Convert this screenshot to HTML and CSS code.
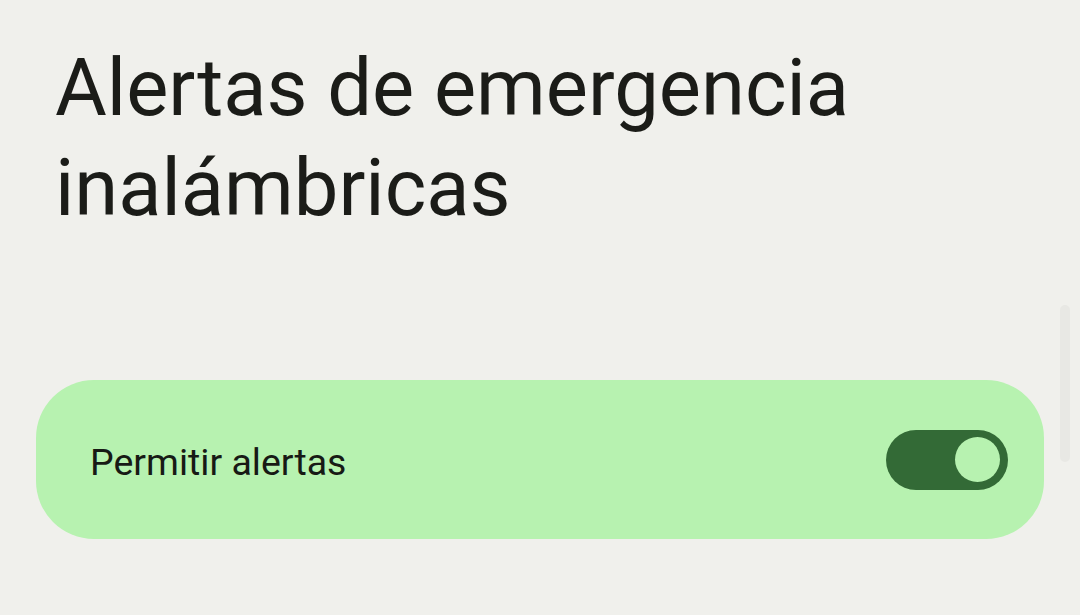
FILE: index.html
```html
<!DOCTYPE html>
<html lang="es">
<head>
<meta charset="utf-8">
<title>Alertas de emergencia inalámbricas</title>
<link rel="stylesheet" href="styles.css">
</head>
<body>
<div class="screen">
  <h1 class="title">Alertas de emergencia inalámbricas</h1>
  <div class="card">
    <span class="label">Permitir alertas</span>
    <div class="switch"><div class="thumb"></div></div>
  </div>
  <div class="scrollbar"></div>
</div>
</body>
</html>
```
FILE: styles.css
```css
html, body {
  margin: 0;
  padding: 0;
  background: #f0f0ec;
}
.screen {
  position: relative;
  width: 1080px;
  height: 615px;
  overflow: hidden;
  font-family: Roboto, "Noto Sans", sans-serif;
  color: #1b1c18;
}
.title {
  margin: 0;
  padding: 38px 200px 0 55px;
  font-size: 79.5px;
  font-weight: 400;
  line-height: 100px;
  letter-spacing: 0;
}
.card {
  margin: 142px 36px 0 36px;
  height: 159px;
  border-radius: 58px;
  background: #b7f2b0;
  display: flex;
  align-items: center;
  justify-content: space-between;
  padding: 0 36px 0 54px;
  box-sizing: border-box;
}
.label {
  font-size: 37.5px;
  color: #171a15;
  padding-top: 4px;
}
.switch {
  width: 122px;
  height: 60px;
  border-radius: 30px;
  background: #336a36;
  display: flex;
  align-items: center;
  justify-content: flex-end;
  padding-right: 8px;
  box-sizing: border-box;
}
.thumb {
  width: 45px;
  height: 45px;
  border-radius: 50%;
  background: #b7f2b0;
}
.scrollbar {
  position: absolute;
  left: 1060px;
  top: 305px;
  width: 10px;
  height: 157px;
  border-radius: 5px;
  background: #e8e8e4;
}
```
